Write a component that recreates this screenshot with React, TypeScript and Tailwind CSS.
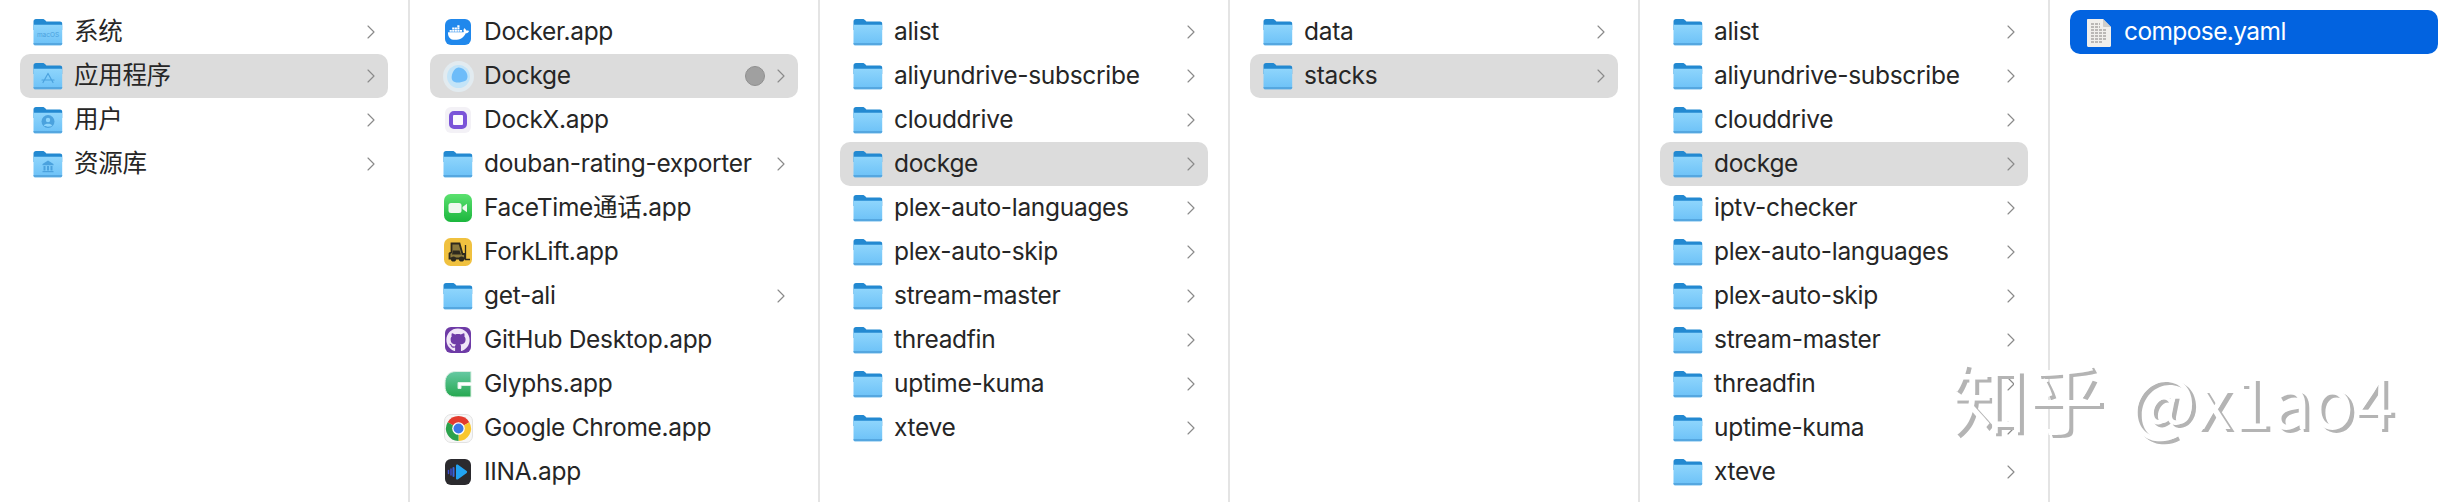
import { ChevronRight } from "lucide-react";
import { FaDocker, FaGithub } from "react-icons/fa";

type Glyph = "macos" | "apps" | "user" | "library";

// finder folder, the special ones get a darker glyph on the front
function Folder({ glyph }: { glyph?: Glyph }) {
  return (
    <svg width="30" height="28" viewBox="0 0 30 28" className="shrink-0">
      <defs>
        <linearGradient id="folderFront" x1="0" y1="0" x2="0" y2="1">
          <stop offset="0" stopColor="#8ed5fc" />
          <stop offset="1" stopColor="#6cc1f7" />
        </linearGradient>
      </defs>
      <path d="M.5 3.500C.5 2 1.500 1 3 1h6.700c1 0 1.600.4 2.300 1.100L13.400 3.400H27c1.300 0 2.200.8 2.200 2.200V12H.5Z" fill="#2389d1" />
      <path d="M.5 6.800h27.200c1 0 1.500.5 1.500 1.400v17.200c0 1.100-.7 1.800-1.900 1.800H2.400C1.200 27.200.5 26.500.5 25.400Z" fill="url(#folderFront)" />
      <path d="M.5 25h28.700v.4c0 1.100-.7 1.800-1.900 1.800H2.400C1.200 27.200.5 26.500.5 25.400Z" fill="#55a7e0" />
      {glyph === "macos" && (
        <text x="15" y="19" textAnchor="middle" fontSize="6.500" fill="#4ba2de" fontFamily="Inter, sans-serif">macOS</text>
      )}
      {glyph === "apps" && (
        <path d="M15 11.500 10 20.500M15 11.500l5 9M9 18h12" stroke="#4ba2de" strokeWidth="1.200" fill="none" strokeLinecap="round" />
      )}
      {glyph === "user" && (
        <g>
          <circle cx="15" cy="15.500" r="6.500" fill="#4ba2de" />
          <circle cx="15" cy="14" r="2.200" fill="#8ed5fc" />
          <path d="M10.800 19.500c1.200-2.200 7.200-2.200 8.400 0-2 1.600-6.400 1.600-8.400 0Z" fill="#8ed5fc" />
        </g>
      )}
      {glyph === "library" && (
        <path d="M15 10.500 9.500 14v1.200h11V14ZM10.500 16h2v4.500h-2ZM14 16h2v4.500h-2ZM17.500 16h2v4.500h-2ZM9.500 21h11v1.300h-11Z" fill="#4ba2de" />
      )}
    </svg>
  );
}

function IconBox({ children }: { children: React.ReactNode }) {
  return <div className="w-[30px] h-[28px] shrink-0 flex items-center justify-center">{children}</div>;
}

const DockerIcon = () => (
  <IconBox>
    <div className="w-[26px] h-[26px] rounded-[6px] bg-[#2088ec] flex items-center justify-center text-white">
      <FaDocker size={21} />
    </div>
  </IconBox>
);

const DockgeIcon = () => (
  <IconBox>
    <svg width="31" height="31" viewBox="0 0 31 31" className="shrink-0">
      <circle cx="15.500" cy="15.500" r="15.500" fill="#e2ebf0" />
      <circle cx="15.500" cy="15.500" r="11.500" fill="#c3e4f8" />
      <path d="M15.500 6.500c4.500 0 9 4 9 9 0 1.500-.7 4-2.500 4.500-3.500 1.200-9.500 3-12.500-.5-2.500-3.500 1-13 6-13Z" fill="#6dbcf9" />
    </svg>
  </IconBox>
);

const DockXIcon = () => (
  <IconBox>
    <div className="w-[26px] h-[26px] rounded-[6px] bg-[#f3f1f6] flex items-center justify-center">
      <div className="w-[18px] h-[18px] rounded-[5px] border-[4px] border-[#7a54d8] bg-[#fbfafd]" />
    </div>
  </IconBox>
);

const FaceTimeIcon = () => (
  <IconBox>
    <svg width="28" height="28" viewBox="0 0 28 28">
      <defs>
        <linearGradient id="ftBg" x1="0" y1="0" x2="0" y2="1">
          <stop offset="0" stopColor="#5be16f" />
          <stop offset="1" stopColor="#1bb63d" />
        </linearGradient>
      </defs>
      <rect width="28" height="28" rx="6.500" fill="url(#ftBg)" />
      <rect x="4.500" y="9" width="13" height="10" rx="2.500" fill="#eef8ee" />
      <path d="M18.500 13 23 9.800v8.400L18.500 15Z" fill="#eef8ee" />
    </svg>
  </IconBox>
);

const ForkLiftIcon = () => (
  <IconBox>
    <svg width="28" height="28" viewBox="0 0 28 28">
      <rect width="28" height="28" rx="6.500" fill="#f0c13f" />
      <path d="M7.500 5.500h8l3 10.500H21v4.500H5.500v-5l2-1.500Z" fill="#8c7a3c" stroke="#2e2a1e" strokeWidth="1.800" />
      <path d="M9 12.500h6.500l1.500 4H8Z" fill="#2e2a1e" />
      <circle cx="9.500" cy="21" r="2.600" fill="#2e2a1e" />
      <circle cx="17.500" cy="21" r="2.600" fill="#2e2a1e" />
      <path d="M21.500 7v14.500H26" fill="none" stroke="#2e2a1e" strokeWidth="1.300" />
    </svg>
  </IconBox>
);

const GitHubIcon = () => (
  <IconBox>
    <div className="w-[26px] h-[26px] rounded-[6px] bg-[#6e3ba6] flex items-center justify-center text-[#f0e6f7]">
      <FaGithub size={24} />
    </div>
  </IconBox>
);

const GlyphsIcon = () => (
  <IconBox>
    <svg width="28" height="28" viewBox="0 0 28 28">
      <defs>
        <linearGradient id="glBg" x1="0" y1="0" x2="0" y2="1">
          <stop offset="0" stopColor="#66c9a3" />
          <stop offset="1" stopColor="#25a84f" />
        </linearGradient>
      </defs>
      <path d="M27 1.500H12C5 1.500 1 6 1 13v3c0 7 4 11 11 11h15V15.500H17v3h-3v-6h13Z" fill="url(#glBg)" stroke="#dcefe3" strokeWidth="1" />
    </svg>
  </IconBox>
);

const ChromeIcon = () => (
  <IconBox>
    <svg width="29" height="29" viewBox="0 0 29 29">
      <rect x=".5" y=".5" width="28" height="28" rx="6.500" fill="#f7f7f7" stroke="#e2e2e2" />
      <path d="M14.500 14.500 3.670 8.250A12.500 12.500 0 0 1 25.330 8.250Z" fill="#e33b2e" />
      <path d="M14.500 14.500 25.330 8.250A12.500 12.500 0 0 1 14.500 27Z" fill="#f9c72f" />
      <path d="M14.500 14.500 14.500 27A12.500 12.500 0 0 1 3.670 8.250Z" fill="#2ba24c" />
      <circle cx="14.500" cy="14.500" r="6.300" fill="#fff" />
      <circle cx="14.500" cy="14.500" r="5" fill="#3b78e7" />
    </svg>
  </IconBox>
);

const IinaIcon = () => (
  <IconBox>
    <svg width="26" height="26" viewBox="0 0 26 26">
      <rect width="26" height="26" rx="6" fill="#2b2a2e" />
      <path d="M3.500 11.500v3M6 10v6" stroke="#3a4fd0" strokeWidth="1.500" strokeLinecap="round" />
      <path d="M8.500 9v8" stroke="#3566e0" strokeWidth="2" strokeLinecap="round" />
      <path d="M11 6.500c0-.9 1-1.400 1.700-.9l9 6.500c.6.400.6 1.300 0 1.800l-9 6.500c-.7.500-1.700 0-1.700-.9Z" fill="#22a4f2" />
    </svg>
  </IconBox>
);

type Item = {
  name: string;
  icon?: React.ReactNode;
  glyph?: Glyph;
  selected?: boolean;
  chevron?: boolean;
  badge?: boolean;
};

const f = (name: string, selected = false): Item => ({ name, selected, chevron: true });

const columns: Item[][] = [
  [
    { name: "系统", glyph: "macos", chevron: true },
    { name: "应用程序", glyph: "apps", chevron: true, selected: true },
    { name: "用户", glyph: "user", chevron: true },
    { name: "资源库", glyph: "library", chevron: true },
  ],
  [
    { name: "Docker.app", icon: <DockerIcon /> },
    { name: "Dockge", icon: <DockgeIcon />, selected: true, chevron: true, badge: true },
    { name: "DockX.app", icon: <DockXIcon /> },
    f("douban-rating-exporter"),
    { name: "FaceTime通话.app", icon: <FaceTimeIcon /> },
    { name: "ForkLift.app", icon: <ForkLiftIcon /> },
    f("get-ali"),
    { name: "GitHub Desktop.app", icon: <GitHubIcon /> },
    { name: "Glyphs.app", icon: <GlyphsIcon /> },
    { name: "Google Chrome.app", icon: <ChromeIcon /> },
    { name: "IINA.app", icon: <IinaIcon /> },
  ],
  [
    f("alist"),
    f("aliyundrive-subscribe"),
    f("clouddrive"),
    f("dockge", true),
    f("plex-auto-languages"),
    f("plex-auto-skip"),
    f("stream-master"),
    f("threadfin"),
    f("uptime-kuma"),
    f("xteve"),
  ],
  [f("data"), f("stacks", true)],
  [
    f("alist"),
    f("aliyundrive-subscribe"),
    f("clouddrive"),
    f("dockge", true),
    f("iptv-checker"),
    f("plex-auto-languages"),
    f("plex-auto-skip"),
    f("stream-master"),
    f("threadfin"),
    f("uptime-kuma"),
    f("xteve"),
  ],
];

function Row({ item }: { item: Item }) {
  return (
    <div className={`h-[44px] rounded-[10px] flex items-center pl-[13px] pr-[13px] ${item.selected ? "bg-[#dcdcdc]" : ""}`}>
      {item.icon ?? <Folder glyph={item.glyph} />}
      <span className="ml-[11px] mb-[2px] flex-1 text-[24.500px] tracking-[-0.3px] whitespace-nowrap text-[#262626]">{item.name}</span>
      {item.badge && <div className="w-[20px] h-[20px] mr-[4px] rounded-full bg-[#a0a0a0] border border-[#8f8f8f]" />}
      {item.chevron && <ChevronRight size={24} strokeWidth={1.15} className="text-[#8a8a8a] -mr-[8px]" />}
    </div>
  );
}

function FileIcon() {
  return (
    <svg width="26" height="29" viewBox="0 0 26 29" className="shrink-0">
      <path d="M2 1h15l8 8v18.500c0 .8-.6 1.500-1.500 1.500h-21C1.600 29 1 28.300 1 27.500V2C1 1.400 1.400 1 2 1Z" fill="#f1efec" />
      <path d="M17 1l8 8h-7c-.6 0-1-.4-1-1Z" fill="#cfcdca" />
      <path d="M5 6h9M5 9h9M5 12h16M5 15h16M5 18h16M5 21h16M5 24h12" stroke="#a9a7a4" strokeWidth="1.300" strokeDasharray="3 1" />
    </svg>
  );
}

export default function App() {
  return (
    <div className="relative flex w-[2458px] h-[502px] overflow-hidden bg-white font-['Inter','Noto_Sans_CJK_SC',sans-serif]">
      {columns.map((items, i) => (
        <div key={i} className="w-[410px] shrink-0 border-r-2 border-[#e4e4e4] px-5 pt-[10px]">
          {items.map((item) => (
            <Row key={item.name} item={item} />
          ))}
        </div>
      ))}
      <div className="w-[408px] shrink-0 px-5 pt-[10px]">
        <div className="h-[44px] rounded-[10px] bg-[#0263e0] flex items-center pl-[16px]">
          <FileIcon />
          <span className="ml-[12px] mb-[2px] text-[24.500px] tracking-[-0.6px] text-white">compose.yaml</span>
        </div>
      </div>
      {/* watermark over the last two columns */}
      <div className="absolute left-[1950px] top-[350px] leading-[92px] whitespace-nowrap text-white [text-shadow:4px_3px_0_#b4b4b4] font-['Noto_Sans_CJK_SC','Inter',sans-serif]">
        <span className="text-[77px]">知乎</span>
        <span className="ml-[25px] text-[71px]">@x1ao4</span>
      </div>
    </div>
  );
}
